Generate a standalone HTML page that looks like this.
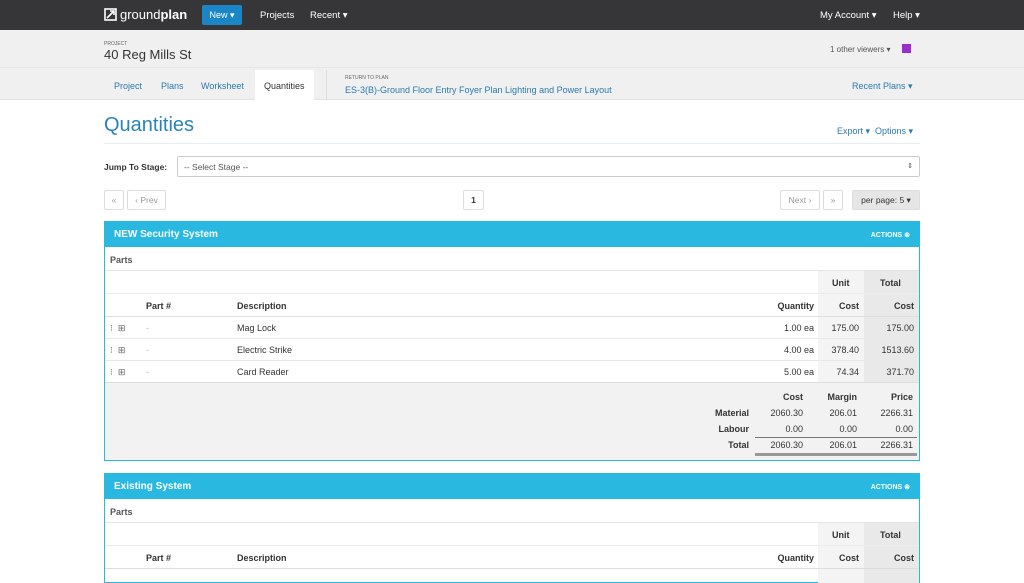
<!DOCTYPE html><html><head><style>
*{box-sizing:border-box;margin:0;padding:0}
body{width:1024px;height:574px;overflow:hidden;background:#fff;font-family:"Liberation Sans",sans-serif;font-size:9px;color:#333;position:relative}
.a{position:absolute;white-space:nowrap}
.nav{left:0;top:0;width:1024px;height:30px;background:#363638}
.w{color:#fff;font-size:9.5px}
.lnk{color:#2a7ab0}
.b{font-weight:bold}
.pnl{position:absolute;left:104px;width:816px;border:1px solid #29b8e0;background:#fff}
.ph{height:25px;background:#29b8e0;color:#fff;font-weight:bold;font-size:10px;padding:7px 9px;position:relative}
.r{text-align:right}
.btn{border:1px solid #ddd;border-radius:2px;background:#fff;height:20px;color:#999;font-size:8.5px;text-align:center;line-height:18px}
.act{position:absolute;right:9px;top:9px;font-size:7px}
</style></head><body>
<div class="a nav"></div>
<svg class="a" style="left:104px;top:8px" width="13" height="13" viewBox="0 0 13 13"><rect x="1" y="1" width="11" height="11" fill="none" stroke="#fff" stroke-width="1.6"/><path d="M3 10L10 3M6 3h4v4" stroke="#fff" stroke-width="1.6" fill="none"/></svg>
<div class="a w" style="left:120px;top:7px;font-size:13px">ground<b>plan</b></div>
<div class="a" style="left:202px;top:5px;width:40px;height:20px;background:#1a86c8;border-radius:2px;color:#fff;font-size:9px;text-align:center;line-height:20px">New ▾</div>
<div class="a w" style="left:260px;top:10px">Projects</div>
<div class="a w" style="left:310px;top:10px">Recent ▾</div>
<div class="a w" style="left:820px;top:10px">My Account ▾</div>
<div class="a w" style="left:893px;top:10px">Help ▾</div>
<div class="a" style="left:0;top:30px;width:1024px;height:70px;background:#f0f0f0;border-bottom:1px solid #e2e2e2"></div>
<div class="a" style="left:104px;top:41px;font-size:5px;color:#666">PROJECT</div>
<div class="a" style="left:104px;top:47px;font-size:13px;color:#333">40 Reg Mills St</div>
<div class="a" style="left:830px;top:45px;font-size:8px;color:#555">1 other viewers ▾</div>
<div class="a" style="left:902px;top:44px;width:9px;height:9px;background:#9b2ec9"></div>
<div class="a" style="left:0;top:67px;width:1024px;height:1px;background:#e6e6e6"></div>
<div class="a" style="left:255px;top:70px;width:59px;height:31px;background:#fff"></div>
<div class="a lnk" style="left:114px;top:81px">Project</div>
<div class="a lnk" style="left:161px;top:81px">Plans</div>
<div class="a lnk" style="left:201px;top:81px">Worksheet</div>
<div class="a" style="left:264px;top:81px">Quantities</div>
<div class="a" style="left:326px;top:70px;width:1px;height:30px;background:#ddd"></div>
<div class="a" style="left:345px;top:75px;font-size:5px;color:#666">RETURN TO PLAN</div>
<div class="a lnk" style="left:345px;top:85px">ES-3(B)-Ground Floor Entry Foyer Plan Lighting and Power Layout</div>
<div class="a lnk" style="left:852px;top:81px">Recent Plans ▾</div>
<div class="a" style="left:104px;top:114px;font-size:20px;color:#2a84b8">Quantities</div>
<div class="a lnk" style="left:837px;top:126px">Export ▾ &nbsp;Options ▾</div>
<div class="a" style="left:104px;top:143px;width:816px;height:1px;background:#e4eef4"></div>
<div class="a b" style="left:104px;top:162px;font-size:8.5px">Jump To Stage:</div>
<div class="a" style="left:177px;top:156px;width:743px;height:21px;border:1px solid #ccc;border-radius:2px;font-size:8.5px;color:#555;padding:5px 6px">-- Select Stage --<span style="float:right;font-size:7px">⇕</span></div>
<div class="a btn" style="left:104px;top:190px;width:20px">«</div>
<div class="a btn" style="left:127px;top:190px;width:39px">‹ Prev</div>
<div class="a btn" style="left:463px;top:190px;width:21px;color:#333;font-weight:bold">1</div>
<div class="a btn" style="left:780px;top:190px;width:40px">Next ›</div>
<div class="a btn" style="left:823px;top:190px;width:20px">»</div>
<div class="a btn" style="left:852px;top:190px;width:68px;background:#e6e6e6;color:#333">per page: 5 ▾</div>

<div class="pnl" style="top:221px;height:240px">
<div class="ph">NEW Security System<span class="act">ACTIONS ⊗</span></div>
<div class="a b" style="left:5px;top:33px;color:#555;font-size:9px">Parts</div>
<div class="a" style="left:0;top:48px;width:814px;height:1px;background:#e4e4e4"></div>
<div class="a" style="left:713px;top:49px;width:46px;height:111px;background:#f4f4f4"></div>
<div class="a" style="left:759px;top:49px;width:55px;height:111px;background:#e9e9e9"></div>
<div class="a b" style="left:727px;top:56px">Unit</div>
<div class="a b" style="left:775px;top:56px">Total</div>
<div class="a" style="left:0;top:71px;width:814px;height:1px;background:#ececec"></div>
<div class="a b" style="left:41px;top:79px">Part #</div>
<div class="a b" style="left:132px;top:79px">Description</div>
<div class="a b r" style="left:650px;top:79px;width:59px">Quantity</div>
<div class="a b r" style="left:713px;top:79px;width:41px">Cost</div>
<div class="a b r" style="left:759px;top:79px;width:50px">Cost</div>
<div class="a" style="left:0;top:94px;width:814px;height:1px;background:#ddd"></div>
<div class="a" style="left:0;top:116px;width:814px;height:1px;background:#e8e8e8"></div>
<div class="a" style="left:0;top:138px;width:814px;height:1px;background:#e8e8e8"></div>
<div class="a" style="left:0;top:160px;width:814px;height:78px;background:#f2f2f2;border-top:1px solid #ddd"></div>
<div class="a" style="left:5px;top:101px;color:#666">⁝ &nbsp;⊞</div><div class="a" style="left:41px;top:101px;color:#bbb">-</div><div class="a" style="left:132px;top:101px">Mag Lock</div><div class="a r" style="left:650px;top:101px;width:59px">1.00 ea</div><div class="a r" style="left:713px;top:101px;width:41px">175.00</div><div class="a r" style="left:759px;top:101px;width:50px">175.00</div>
<div class="a" style="left:5px;top:123px;color:#666">⁝ &nbsp;⊞</div><div class="a" style="left:41px;top:123px;color:#bbb">-</div><div class="a" style="left:132px;top:123px">Electric Strike</div><div class="a r" style="left:650px;top:123px;width:59px">4.00 ea</div><div class="a r" style="left:713px;top:123px;width:41px">378.40</div><div class="a r" style="left:759px;top:123px;width:50px">1513.60</div>
<div class="a" style="left:5px;top:145px;color:#666">⁝ &nbsp;⊞</div><div class="a" style="left:41px;top:145px;color:#bbb">-</div><div class="a" style="left:132px;top:145px">Card Reader</div><div class="a r" style="left:650px;top:145px;width:59px">5.00 ea</div><div class="a r" style="left:713px;top:145px;width:41px">74.34</div><div class="a r" style="left:759px;top:145px;width:50px">371.70</div>
<div class="a b r" style="left:650px;top:170px;width:48px">Cost</div><div class="a b r" style="left:700px;top:170px;width:52px">Margin</div><div class="a b r" style="left:760px;top:170px;width:48px">Price</div>
<div class="a b r" style="left:580px;top:186px;width:64px">Material</div><div class="a r" style="left:650px;top:186px;width:48px">2060.30</div><div class="a r" style="left:700px;top:186px;width:52px">206.01</div><div class="a r" style="left:760px;top:186px;width:48px">2266.31</div>
<div class="a b r" style="left:580px;top:202px;width:64px">Labour</div><div class="a r" style="left:650px;top:202px;width:48px">0.00</div><div class="a r" style="left:700px;top:202px;width:52px">0.00</div><div class="a r" style="left:760px;top:202px;width:48px">0.00</div>
<div class="a" style="left:650px;top:215px;width:162px;height:1px;background:#777"></div>
<div class="a b r" style="left:580px;top:218px;width:64px">Total</div><div class="a r" style="left:650px;top:218px;width:48px">2060.30</div><div class="a r" style="left:700px;top:218px;width:52px">206.01</div><div class="a r" style="left:760px;top:218px;width:48px">2266.31</div>
<div class="a" style="left:650px;top:231px;width:162px;height:3px;background:#999"></div>
</div>

<div class="pnl" style="top:473px;height:110px">
<div class="ph">Existing System<span class="act">ACTIONS ⊗</span></div>
<div class="a b" style="left:5px;top:33px;color:#555;font-size:9px">Parts</div>
<div class="a" style="left:0;top:48px;width:814px;height:1px;background:#e4e4e4"></div>
<div class="a" style="left:713px;top:49px;width:46px;height:60px;background:#f4f4f4"></div>
<div class="a" style="left:759px;top:49px;width:55px;height:60px;background:#e9e9e9"></div>
<div class="a b" style="left:727px;top:56px">Unit</div>
<div class="a b" style="left:775px;top:56px">Total</div>
<div class="a" style="left:0;top:71px;width:814px;height:1px;background:#ececec"></div>
<div class="a b" style="left:41px;top:79px">Part #</div>
<div class="a b" style="left:132px;top:79px">Description</div>
<div class="a b r" style="left:650px;top:79px;width:59px">Quantity</div>
<div class="a b r" style="left:713px;top:79px;width:41px">Cost</div>
<div class="a b r" style="left:759px;top:79px;width:50px">Cost</div>
<div class="a" style="left:0;top:94px;width:814px;height:1px;background:#ddd"></div>
</div>
</body></html>
